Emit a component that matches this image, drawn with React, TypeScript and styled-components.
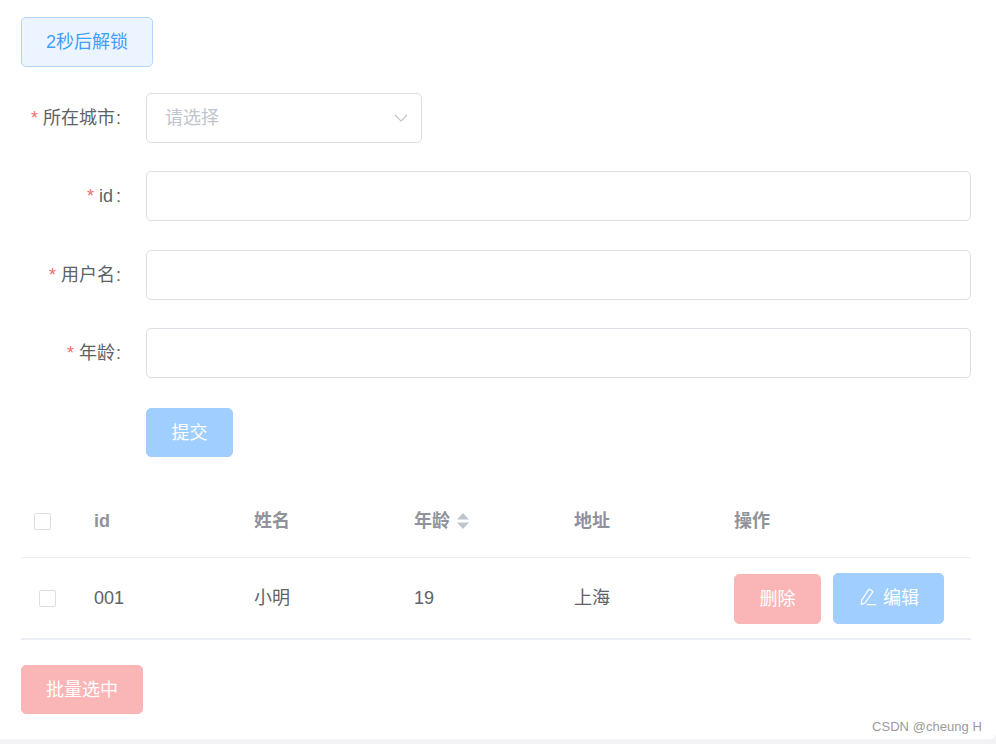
import styled, { createGlobalStyle } from 'styled-components'

const FONT = `"Liberation Sans", "Noto Sans CJK SC", sans-serif`

const GlobalStyle = createGlobalStyle`
  html, body {
    margin: 0;
    background: #f3f3f6;
    font-family: ${FONT};
  }
  * { box-sizing: border-box; }
`

const Page = styled.div`
  position: relative;
  height: 739px;
  padding: 17px 25px 0 21px;
  background: #fff;
  border-bottom-right-radius: 6px;
  overflow: hidden;
  line-height: 18px;
`

const Button = styled.button<{ $kind: 'primary' | 'danger' | 'plain'; $w: number; $h?: number; $gap?: number }>`
  display: inline-flex;
  align-items: center;
  justify-content: center;
  gap: ${(p) => p.$gap ?? 0}px;
  width: ${(p) => p.$w}px;
  height: ${(p) => p.$h ?? 49}px;
  padding: 0;
  font: 18px/18px ${FONT};
  border-radius: 5px;
  border: 1px solid
    ${(p) => (p.$kind === 'danger' ? '#fab6b6' : p.$kind === 'plain' ? '#b3d8ff' : '#a0cfff')};
  color: ${(p) => (p.$kind === 'plain' ? '#409eff' : '#fff')};
  background: ${(p) => (p.$kind === 'danger' ? '#fab6b6' : p.$kind === 'plain' ? '#ecf5ff' : '#a0cfff')};
`

const Form = styled.form`
  display: flex;
  flex-direction: column;
  gap: 28.4px;
  margin-top: 26px;
`

const Row = styled.div`
  display: flex;
  align-items: center;
  height: 50px;
`

const Label = styled.label`
  width: 125px;
  padding-right: 25px;
  text-align: right;
  font-size: 18px;
  color: #606266;
  white-space: nowrap;
`

const Star = styled.span`
  color: #f56c6c;
  margin-right: 5px;
`

const Colon = styled.span<{ $gap?: number }>`
  margin-left: ${(p) => p.$gap ?? 1}px;
`

const Input = styled.div`
  flex: 1;
  height: 50px;
  border: 1px solid #dcdfe6;
  border-radius: 5px;
  background: #fff;
`

const Select = styled.div`
  display: flex;
  align-items: center;
  justify-content: space-between;
  width: 276px;
  height: 50px;
  padding: 0 13px 0 18px;
  border: 1px solid #dcdfe6;
  border-radius: 5px;
  font-size: 18px;
  color: #c0c4cc;
`

const SubmitRow = styled.div`
  display: flex;
  height: 49px;
  margin: 30px 0 0 125px;
`

const Table = styled.div`
  margin-top: 28px;
  border-bottom: 2px solid #ebeef5;
`

const TableRow = styled.div<{ $head?: boolean }>`
  display: grid;
  grid-template-columns: 73px repeat(4, 160px) 1fr;
  align-items: center;
  height: ${(p) => (p.$head ? 73 : 80)}px;
  font-size: 18px;
  font-weight: ${(p) => (p.$head ? 700 : 400)};
  color: ${(p) => (p.$head ? '#909399' : '#606266')};
  border-bottom: ${(p) => (p.$head ? '1px solid #ebeef5' : 'none')};
`

const CheckCell = styled.div<{ $inset: number }>`
  padding-left: ${(p) => p.$inset}px;
`

const Check = styled.span`
  display: block;
  width: 17px;
  height: 17px;
  border: 1px solid #dcdfe6;
  border-radius: 2px;
  background: #fff;
`

const SortCell = styled.div`
  display: flex;
  align-items: center;
  gap: 7px;
`

const Actions = styled.div`
  display: flex;
  align-items: flex-end;
  gap: 12px;
`

const BatchRow = styled.div`
  display: flex;
  margin-top: 25px;
`

const Watermark = styled.div`
  position: absolute;
  right: 14px;
  bottom: 3px;
  font-size: 13px;
  letter-spacing: 0.05px;
  color: #9a9a9a;
`

const Chevron = () => (
  <svg width="14" height="8" viewBox="0 0 14 8" fill="none">
    <path d="M1 1l6 6 6-6" stroke="#c0c4cc" strokeWidth="1.1" />
  </svg>
)

const SortCaret = () => (
  <svg width="12" height="16" viewBox="0 0 12 16">
    <path d="M6 0l6 6.5H0z" fill="#c0c4cc" />
    <path d="M6 16l6-6.5H0z" fill="#c0c4cc" />
  </svg>
)

const EditIcon = () => (
  <svg width="18" height="20" viewBox="0 0 18 20" fill="none" stroke="#fff" strokeWidth="1.2">
    <path d="M10.6 1.6a1 1 0 0 1 1.4-.2l2.3 1.6a1 1 0 0 1 .2 1.4L7 15l-3.6 1.4L3.6 12.4z" />
    <path d="M8.8 16.6H18" />
  </svg>
)

export default function App() {
  return (
    <Page>
      <GlobalStyle />
      <Button $kind="plain" $w={132} $h={50}>2秒后解锁</Button>
      <Form>
        <Row>
          <Label><Star>*</Star>所在城市<Colon>:</Colon></Label>
          <Select>请选择<Chevron /></Select>
        </Row>
        <Row>
          <Label><Star>*</Star>id<Colon $gap={3}>:</Colon></Label>
          <Input />
        </Row>
        <Row>
          <Label><Star>*</Star>用户名<Colon>:</Colon></Label>
          <Input />
        </Row>
        <Row>
          <Label><Star>*</Star>年龄<Colon>:</Colon></Label>
          <Input />
        </Row>
      </Form>
      <SubmitRow>
        <Button $kind="primary" $w={87}>提交</Button>
      </SubmitRow>
      <Table>
        <TableRow $head>
          <CheckCell $inset={13}><Check /></CheckCell>
          <div>id</div>
          <div>姓名</div>
          <SortCell>年龄<SortCaret /></SortCell>
          <div>地址</div>
          <div>操作</div>
        </TableRow>
        <TableRow>
          <CheckCell $inset={18}><Check /></CheckCell>
          <div>001</div>
          <div>小明</div>
          <div>19</div>
          <div>上海</div>
          <Actions>
            <Button $kind="danger" $w={87} $h={50}>删除</Button>
            <Button $kind="primary" $w={111} $h={51} $gap={7}><EditIcon />编辑</Button>
          </Actions>
        </TableRow>
      </Table>
      <BatchRow>
        <Button $kind="danger" $w={122}>批量选中</Button>
      </BatchRow>
      <Watermark>CSDN @cheung H</Watermark>
    </Page>
  )
}
